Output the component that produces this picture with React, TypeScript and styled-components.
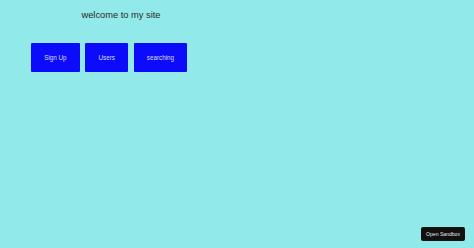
import React from 'react';
import styled, { createGlobalStyle } from 'styled-components';

const GlobalStyle = createGlobalStyle`
  html, body {
    margin: 0;
    padding: 0;
    height: 100%;
    background: #92e9e9;
    font-family: "Liberation Sans", Arial, sans-serif;
  }
  #root {
    min-height: 100%;
  }
`;

const Page = styled.div`
  display: flex;
  flex-direction: column;
  padding: 9.5px 0 0 0;
`;

const Header = styled.header`
  width: 242px;
  text-align: center;
`;

const Title = styled.h1`
  margin: 0;
  font-size: 9.3px;
  line-height: 11px;
  font-weight: 400;
  color: #2b2b2b;
`;

const Nav = styled.nav`
  display: flex;
  gap: 5.5px;
  margin: 22.5px 0 0 31px;
`;

const NavButton = styled.button`
  height: 29px;
  padding: 0 13.2px;
  border: none;
  border-radius: 1px;
  background: #0c0cfa;
  color: #dcdcf0;
  font-family: "Liberation Sans", Arial, sans-serif;
  font-size: 6.3px;
  cursor: pointer;
`;

const SandboxButton = styled.button`
  position: fixed;
  right: 9px;
  bottom: 7px;
  height: 14px;
  padding: 0 5px;
  border: none;
  border-radius: 2px;
  background: #111;
  color: #e8e8e8;
  font-family: "Liberation Sans", Arial, sans-serif;
  font-size: 5.1px;
`;

const links = ['Sign Up', 'Users', 'searching'];

export default function App() {
  return (
    <>
      <GlobalStyle />
      <Page>
        <Header>
          <Title>welcome to my site</Title>
        </Header>
        <Nav>
          {links.map(label => (
            <NavButton key={label}>{label}</NavButton>
          ))}
        </Nav>
      </Page>
      <SandboxButton>Open Sandbox</SandboxButton>
    </>
  );
}
